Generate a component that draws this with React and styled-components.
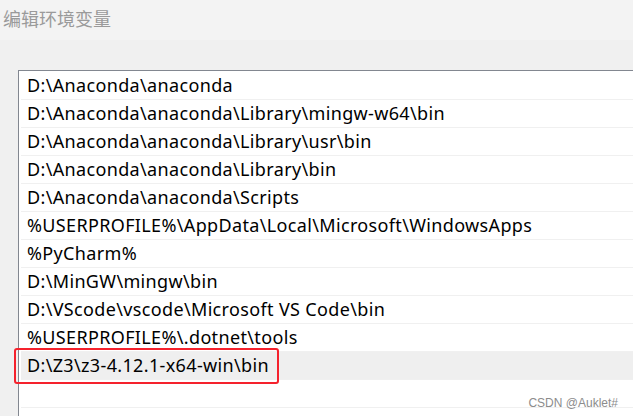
import React from 'react'
import styled, { createGlobalStyle } from 'styled-components'

const GlobalStyle = createGlobalStyle`
  html, body {
    margin: 0;
    padding: 0;
    width: 633px;
    height: 416px;
    overflow: hidden;
    background: #f0f0f0;
  }
`;

const Window = styled.div`
  width: 633px;
  height: 416px;
  display: flex;
  flex-direction: column;
  background: #f0f0f0;
  position: relative;
  overflow: hidden;
  font-family: "Noto Sans", "Noto Sans CJK SC", sans-serif;
`;

const TitleBar = styled.div`
  height: 40px;
  flex-shrink: 0;
  background: #f3f3f3;
  display: flex;
  align-items: center;
  padding: 0 0 4px 3px;
  box-sizing: border-box;
  color: #9a9a9a;
  font-size: 18px;
  font-family: "Noto Sans CJK SC", sans-serif;
`;

const Body = styled.div`
  flex: 1;
  padding: 30px 0 0 18px;
`;

const ListBox = styled.div`
  border-top: 1px solid #828790;
  border-left: 1px solid #828790;
  background: #ffffff;
  height: 400px;
  padding: 1px 0 0 1px;
  box-sizing: border-box;
`;

const Row = styled.div`
  position: relative;
  height: 28px;
  box-sizing: border-box;
  border-bottom: 1px solid #f0f0f0;
  margin-left: 1px;
  display: flex;
  align-items: center;
  padding-left: 6px;
  padding-bottom: 1px;
  background: ${p => (p.$selected ? '#efefef' : '#ffffff')};
  color: #000;
  font-size: 18px;
  font-family: "Noto Sans", "Noto Sans CJK SC", sans-serif;
  white-space: nowrap;
  letter-spacing: 0.35px;
`;

const Highlight = styled.div`
  position: absolute;
  z-index: 2;
  left: -7px;
  top: -4px;
  width: 265px;
  height: 36px;
  box-sizing: border-box;
  border: 2.5px solid #f5222d;
  border-radius: 3px;
  pointer-events: none;
`;

const Watermark = styled.div`
  position: absolute;
  right: 15px;
  bottom: 6px;
  color: #8c8c8c;
  font-size: 12px;
  font-family: "Liberation Sans", sans-serif;
`;

const paths = [
  'D:\\Anaconda\\anaconda',
  'D:\\Anaconda\\anaconda\\Library\\mingw-w64\\bin',
  'D:\\Anaconda\\anaconda\\Library\\usr\\bin',
  'D:\\Anaconda\\anaconda\\Library\\bin',
  'D:\\Anaconda\\anaconda\\Scripts',
  '%USERPROFILE%\\AppData\\Local\\Microsoft\\WindowsApps',
  '%PyCharm%',
  'D:\\MinGW\\mingw\\bin',
  'D:\\VScode\\vscode\\Microsoft VS Code\\bin',
  '%USERPROFILE%\\.dotnet\\tools',
  'D:\\Z3\\z3-4.12.1-x64-win\\bin',
  '',
];

const App = () => {
  return (
    <Window>
      <GlobalStyle />
      <TitleBar>编辑环境变量</TitleBar>
      <Body>
        <ListBox>
          {paths.map((p, i) => (
            <Row key={i} $selected={i === 10}>
              {p}
              {i === 10 && <Highlight />}
            </Row>
          ))}
        </ListBox>
      </Body>
      <Watermark>CSDN @Auklet#</Watermark>
    </Window>
  );
};

export default App;
